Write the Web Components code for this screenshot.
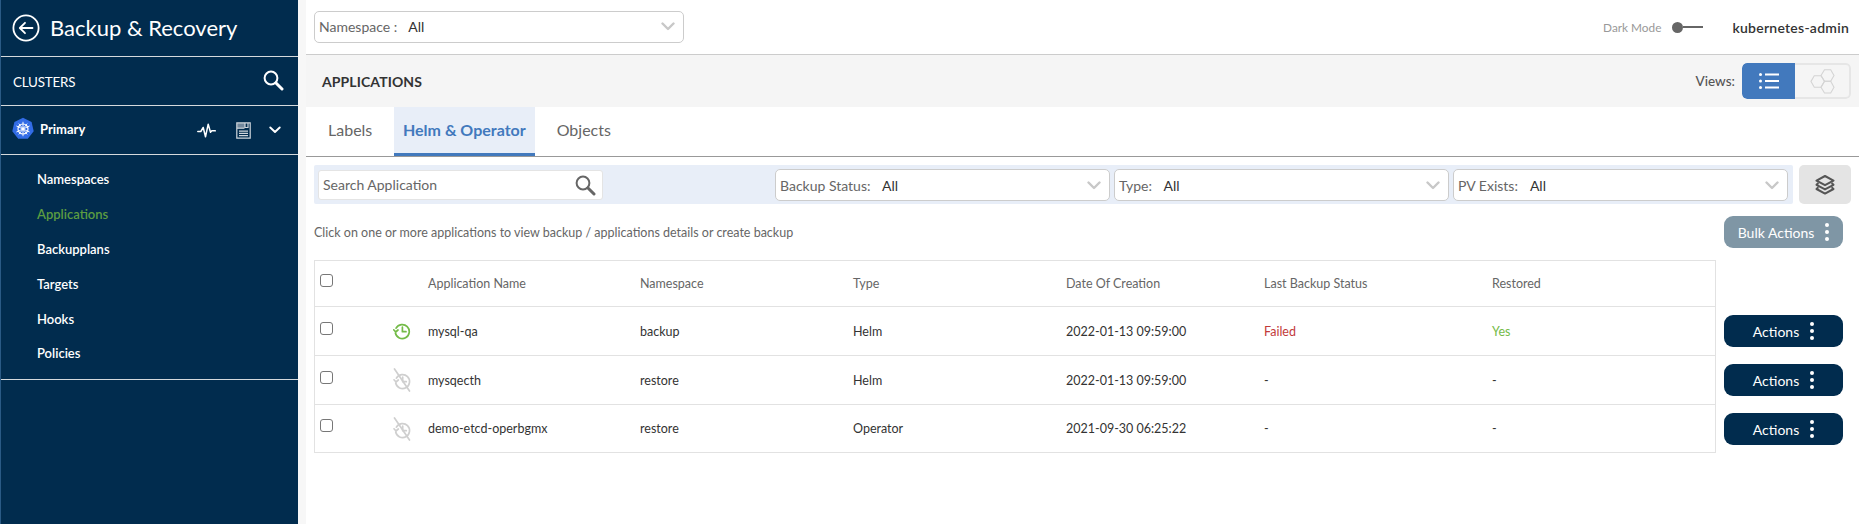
<!DOCTYPE html>
<html lang="en">
<head>
<meta charset="utf-8">
<title>Backup &amp; Recovery</title>
<style>
html,body{margin:0;padding:0;height:100%;overflow:hidden;background:#fff}
body{font-family:"Lato","Noto Sans",sans-serif;color:#333}
</style>
</head>
<body>
<app-shell></app-shell>
<script>
const ic = {
 back:`<svg width="28" height="28" viewBox="0 0 28 28" fill="none" stroke="#fff" stroke-width="1.8" stroke-linecap="round" stroke-linejoin="round"><circle cx="14" cy="14" r="12.6"/><path d="M20.5 14H8M13 8.8 7.8 14l5.2 5.2"/></svg>`,
 search:c=>`<svg width="22" height="22" viewBox="0 0 22 22" fill="none" stroke="${c}" stroke-linecap="round"><circle cx="9" cy="9" r="6.4" stroke-width="2"/><path d="M14 14l6 6" stroke-width="3"/></svg>`,
 kube:`<svg width="24" height="24" viewBox="0 0 24 24"><path d="M12 .8l8.6 4.1 2.1 9.3-5.9 7.5H7.2l-5.9-7.5 2.1-9.300z" fill="#326ce5"/><g fill="none" stroke="#fff" stroke-width="1.2"><circle cx="12" cy="12" r="5"/><path d="M12 4.8v14.4M5.4 9l13.2 6M18.6 9 5.400 15M7.800 6.600l8.400 10.800M16.200 6.600 7.800 17.400" stroke-width=".9"/></g><circle cx="12" cy="12" r="1.4" fill="#fff"/></svg>`,
 pulse:`<svg width="19" height="15" viewBox="0 0 19 15" fill="none" stroke="#fff" stroke-width="1.5" stroke-linejoin="round" stroke-linecap="round"><path d="M.8 8.500H3.800L6.200 4.500l2.300 9.300L11.200 1.200l2.300 8 1.300-1.400h3.500"/></svg>`,
 save:`<svg width="15" height="17" viewBox="0 0 15 17" fill="none" stroke="#cfd6dc" stroke-width="1.2"><path d="M.8.8h13.400v15.400H.8z"/><path d="M9 1v4.500h3V1"/><path d="M1 6.200h7.500"/><path d="M3 9.200h9M3 11.400h9M3 13.600h9" stroke-width="1.300"/><path d="M1 1h8v5H1z" fill="#cfd6dc" opacity=".55" stroke="none"/></svg>`,
 chevW:`<svg width="12" height="8" viewBox="0 0 12 8" fill="none" stroke="#fff" stroke-width="1.9" stroke-linecap="round" stroke-linejoin="round"><path d="M1.300 1.500 6 6l4.700-4.500"/></svg>`,
 chev:`<svg width="14" height="9" viewBox="0 0 14 9" fill="none" stroke="#c8c8c8" stroke-width="2.4" stroke-linecap="round" stroke-linejoin="round"><path d="M1.500 1.500 7 7l5.500-5.500"/></svg>`,
 list:`<svg width="20" height="18" viewBox="0 0 20 18" fill="#fff"><circle cx="1.500" cy="2.500" r="1.500"/><circle cx="1.500" cy="9" r="1.500"/><circle cx="1.500" cy="15.500" r="1.500"/><path d="M6 1.600h14v1.800H6zM6 8.100h14v1.800H6zM6 14.600h14v1.800H6z"/></svg>`,
 hex:`<svg width="25" height="25" viewBox="0 0 25 25" fill="none" stroke="#d4d4d4" stroke-width="1.1"><path d="M11 6.500 14.500.8h6.200l3.300 5.700-3.300 5.700h-6.200z"/><path d="M11 18.300l3.500-6.100h6.200l3.300 6.100-3.300 5.700h-6.200z"/><path d="M1 12.400 4.300 6.700H11l3.500 5.500-3.500 6.100H4.300z"/></svg>`,
 layers:`<svg width="20" height="20" viewBox="0 0 20 20" fill="none" stroke="#555" stroke-width="2" stroke-linejoin="round"><path d="M10 1 18.500 5.600 10 10.200 1.500 5.600z"/><path d="M3.400 8 1.500 9.800 10 14.400l8.500-4.600L16.600 8"/><path d="M3.400 12.200 1.500 14 10 18.600 18.500 14l-1.900-1.800"/></svg>`,
 hist:`<svg width="18" height="18" viewBox="0 0 18 18" fill="none" stroke="#74bb48" stroke-width="1.7" stroke-linecap="round" stroke-linejoin="round"><path d="M3.100 6.200A7 7 0 1 1 2.400 11"/><path d="M.7 7.800 2.700 10 5 8"/><path d="M9.400 5.200V9.700H13"/></svg>`,
 noHist:`<svg width="19" height="24" viewBox="0 0 19 24" fill="none" stroke="#cfcfcf" stroke-width="1.7" stroke-linecap="round" stroke-linejoin="round"><path d="M3.400 10.200A7 7 0 1 1 2.700 15"/><path d="M1 11.800 3 14l2.300-2"/><path d="M9.700 9.200v4.500h3.600"/><path d="M1.500 1 16.500 23"/></svg>`
};
function def(name, css, html){
  class E extends HTMLElement{
    constructor(){super();const s=this.attachShadow({mode:"open"});
      s.innerHTML=`<style>${css}</style>`+(typeof html==="function"?html(this):html);}
  }
  customElements.define(name,E);
}
def("kebab-dots",`:host{display:inline-flex;flex-direction:column;gap:3px}i{width:4px;height:4px;border-radius:50%;background:#fff;display:block}`,`<i></i><i></i><i></i>`);
def("action-button",`:host{display:flex;align-items:center;justify-content:center;gap:11px;width:119px;height:32px;border-radius:9px;background:var(--bg,#012c4e);color:#fff;font:14px "Lato",sans-serif;flex:none;box-sizing:border-box}`,`<slot></slot><kebab-dots></kebab-dots>`);
def("select-box",`:host{display:flex;align-items:center;box-sizing:border-box;height:32px;background:#fff;border:1px solid #ccc;border-radius:5px;font:14px "Lato",sans-serif;color:#666;position:relative;flex:none}
 .l{padding-left:var(--lp,4px);white-space:pre}.v{color:#333;margin-left:var(--gap,10px)}.c{margin-left:auto;margin-right:var(--cr,8px);display:flex}`,
 h=>`<span class="l">${h.getAttribute("label")}</span><span class="v">All</span><span class="c">${ic.chev}</span>`);
def("side-nav",`:host{display:flex;flex-direction:column;width:298px;height:524px;background:#012c4e;color:#fff;flex:none;box-sizing:border-box;border-left:1px solid #2a5a85}
 .row{display:flex;align-items:center;box-sizing:border-box;border-bottom:1.5px solid #d5d9dc}
 .head{height:57px;padding-left:11px}.head b{font:400 22px "Lato",sans-serif;margin-left:10px;margin-top:-1px}
 .cl{height:49px;padding:0 14px 0 12px;justify-content:space-between;font-size:13.4px;letter-spacing:-.2px}
 .cl span{margin-top:1px}
 .cl svg{display:block;margin-top:-2px}
 .pr{height:49px;padding-left:10px;padding-right:17px}.pr .nm{font:700 13px "Lato",sans-serif;margin-left:5px;margin-top:-3px}.pr svg{display:block}
 .pr .i1{margin-left:auto}.pr .i2{margin-left:20px}.pr .i3{margin-left:18px}
 .kb{margin-top:-2px}
 nav{display:flex;flex-direction:column;padding:7px 0 7.4px 36px;border-bottom:1.5px solid #d5d9dc}
 nav a{height:34.9px;font:600 13px/34.9px "Lato",sans-serif;color:#fff}
 nav a.on{color:#5c9c41}`,
 `<div class="row head">${ic.back}<b>Backup &amp; Recovery</b></div>
  <div class="row cl"><span>CLUSTERS</span>${ic.search("#fff")}</div>
  <div class="row pr"><span class="kb">${ic.kube}</span><span class="nm">Primary</span><span class="i1">${ic.pulse}</span><span class="i2">${ic.save}</span><span class="i3">${ic.chevW}</span></div>
  <nav><a>Namespaces</a><a class="on">Applications</a><a>Backupplans</a><a>Targets</a><a>Hooks</a><a>Policies</a></nav>`);
def("top-bar",`:host{display:flex;align-items:center;height:55px;box-sizing:border-box;border-bottom:1.5px solid #ccc;background:#fff;padding:0 10px 0 8px;--lp:4px}
 select-box{width:370px;margin-top:-1px;--gap:11px;--cr:8px}
 .dm{margin-left:auto;font-size:11.8px;color:#999}
 .t{width:31px;height:11px;margin-left:11px;display:flex;align-items:center}.t i{width:11px;height:11px;border-radius:50%;background:#666;flex:none}.t u{height:2px;flex:1;background:#666;display:block}
 .usr{margin-left:29px;font:600 14px "Lato",sans-serif;letter-spacing:.25px;color:#333}`,
 `<select-box label="Namespace :"></select-box><span class="dm">Dark Mode</span><span class="t"><i></i><u></u></span><span class="usr">kubernetes-admin</span>`);
def("title-bar",`:host{display:flex;align-items:center;height:52px;background:#f5f5f5;padding:0 8px 0 16px}
 h1{font:700 14px "Lato",sans-serif;margin:0;color:#333;letter-spacing:.1px}
 .v{margin-left:auto;font-size:13.5px;color:#555;margin-right:7px;font-weight:500}
 .g{display:flex;height:36px;width:109px;border-radius:5px;overflow:hidden;box-sizing:border-box}
 .a{width:53px;background:#4279bd;display:flex;align-items:center;justify-content:center;border-radius:5px 0 0 5px}
 .b{flex:1;border:2px solid #e6e6e6;border-left:0;border-radius:0 5px 5px 0;display:flex;align-items:center;justify-content:center;box-sizing:border-box;padding-left:1px}
 svg{display:block}`,
 `<h1>APPLICATIONS</h1><span class="v">Views:</span><div class="g"><div class="a">${ic.list}</div><div class="b">${ic.hex}</div></div>`);
def("tab-strip",`:host{display:flex;height:50px;box-sizing:border-box;border-bottom:1px solid #999;background:#fff;font:16px "Lato",sans-serif;color:#666}
 a{display:flex;align-items:center;padding:0 22px 4px;height:49px;box-sizing:border-box;margin-bottom:-1px}
 a.on{background:#e8eef8;color:#4279bd;font-weight:700;padding:0 9px 1px;border-bottom:3px solid #4279bd}
 a.first{width:88px}`,
 `<a class="first">Labels</a><a class="on">Helm &amp; Operator</a><a>Objects</a>`);
def("search-box",`:host{display:flex;align-items:center;width:285px;height:30px;box-sizing:border-box;background:#fff;border-radius:3px;border:1px solid #e4e4e4;font:14px "Lato",sans-serif;color:#666;padding:0 6px 0 4px;justify-content:space-between}svg{display:block}`,
 `<span>Search Application</span>${ic.search("#666")}`);
def("filter-bar",`:host{display:flex;gap:6px;margin-top:8px;height:39px}
 .band{display:flex;align-items:center;width:1479px;box-sizing:border-box;background:#e8eef8;padding:0 5px 0 4px;gap:4px;border-radius:2px}
 .sp{flex:1}
 select-box{width:335px;--lp:4px;margin-top:1px}
 .bk{--gap:11.5px}.ty{--gap:11.5px}.pv{--gap:12px}
 .btn{width:52px;background:#e4e4e4;border-radius:5px;display:flex;align-items:center;justify-content:center}svg{display:block}`,
 `<div class="band"><search-box></search-box><span class="sp"></span><select-box class="bk" label="Backup Status:"></select-box><select-box class="ty" label="Type:"></select-box><select-box class="pv" label="PV Exists:"></select-box></div><div class="btn">${ic.layers}</div>`);
def("hint-row",`:host{display:flex;align-items:center;justify-content:space-between;margin-top:12px;padding-right:8px;font-size:12.5px;color:#666;height:32px}`,
 `<span>Click on one or more applications to view backup / applications details or create backup</span><action-button style="--bg:#7f96a5">Bulk Actions</action-button>`);
def("check-box",`:host{display:block;width:13px;height:13px;border:1px solid #777;border-radius:3px;box-sizing:border-box;background:#fff}`,``);
def("app-row",`:host{display:grid;grid-template-columns:67px 46px 212px 213px 213px 198px 228px 1fr;align-items:center;height:var(--h,49px);box-sizing:border-box;border-bottom:1px solid #e2e2e2;font-size:12.5px;color:#333}
 :host([head]){color:#666}
 .c{padding-left:5px;margin-top:-6px}
 .i{display:flex;align-items:center;justify-content:center;padding-right:6px;height:24px}
 svg{display:block}
 .red{color:#c23a3a}.grn{color:#74bb48}`,
 h=>{
  const cols=(h.getAttribute("cols")||"").split("|");
  const icon=h.getAttribute("icon");
  return `<div class="c"><check-box></check-box></div><div class="i">${icon?ic[icon]:""}</div>`+cols.map(t=>{
    const cl=t==="Failed"?"red":t==="Yes"?"grn":"";
    return `<div class="${cl}">${t}</div>`}).join("");
 });
def("app-table",`:host{display:block;width:1402px;box-sizing:border-box;border:1px solid #e2e2e2;flex:none}
 ::slotted(app-row:last-child){border-bottom:0}`,`<slot></slot>`);
def("main-area",`:host{display:block;flex:1;min-width:0;height:524px;background:#f7f7f7;padding-left:8px;box-sizing:border-box}
 .w{background:#fff;height:100%}
 .c{padding:0 8px}
 .tb{display:flex;margin-top:12px}
 .ac{display:flex;flex-direction:column;gap:17px;padding:55px 0 0 8px}`,
 `<div class="w"><top-bar></top-bar><title-bar></title-bar><tab-strip></tab-strip>
  <div class="c"><filter-bar></filter-bar><hint-row></hint-row>
  <div class="tb"><app-table>
    <app-row head style="--h:46px" cols="Application Name|Namespace|Type|Date Of Creation|Last Backup Status|Restored"></app-row>
    <app-row icon="hist" cols="mysql-qa|backup|Helm|2022-01-13 09:59:00|Failed|Yes"></app-row>
    <app-row icon="noHist" cols="mysqecth|restore|Helm|2022-01-13 09:59:00|-|-"></app-row>
    <app-row icon="noHist" style="--h:47px" cols="demo-etcd-operbgmx|restore|Operator|2021-09-30 06:25:22|-|-"></app-row>
  </app-table>
  <div class="ac"><action-button>Actions</action-button><action-button>Actions</action-button><action-button>Actions</action-button></div>
  </div></div></div>`);
def("app-shell",`:host{display:flex;width:1859px;height:524px;overflow:hidden}`,`<side-nav></side-nav><main-area></main-area>`);
</script>
</body>
</html>
